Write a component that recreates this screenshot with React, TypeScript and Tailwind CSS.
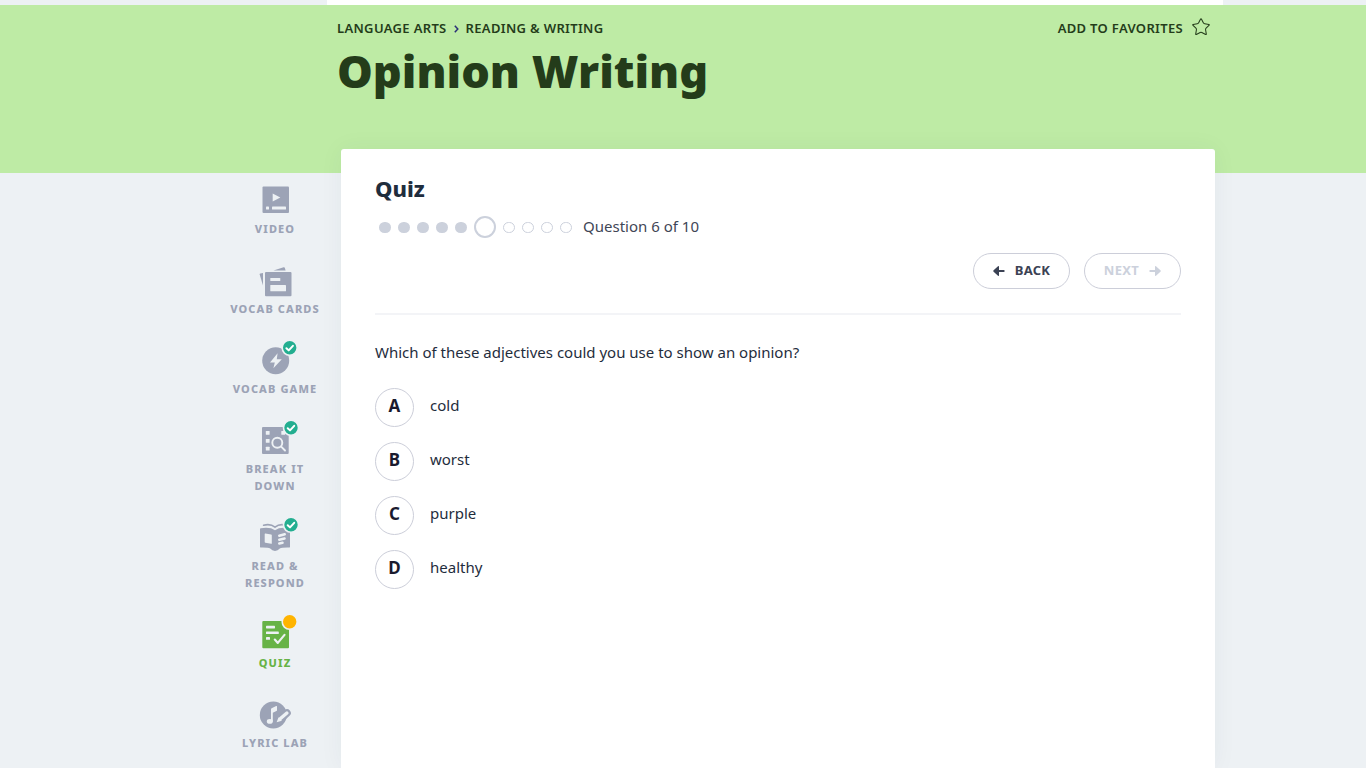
import { useState } from "react";
import type { ReactNode } from "react";
import { Star } from "lucide-react";
import clsx from "clsx";

type Badge = "done" | "current";

type Activity = {
  label: string;
  icon: ReactNode;
  badge?: Badge;
  badgeX?: number;
  active?: boolean;
};

const activities: Activity[] = [
  {
    label: "Video",
    icon: (
      <>
        <rect x="3.5" y="2.5" width="26.5" height="26.5" rx="1" />
        <g className="fill-[#edf1f4]">
          <path d="M13.7 9.5v8l7.6-4z" />
          <rect x="7" y="22.6" width="3" height="3" rx=".6" />
          <rect x="13" y="22.6" width="14" height="3" rx=".6" />
        </g>
      </>
    )
  },
  {
    label: "Vocab Cards",
    icon: (
      <>
        <path d="M14.5 6.4 24.6 3.3q.9-.3 1.2.5l.8 2.6z" />
        <path d="M.7 10.6q-.2-.8.6-1L4 9v12.4z" />
        <rect x="6" y="8" width="26.5" height="24.3" rx="1" />
        <g className="fill-[#edf1f4]">
          <rect x="11.3" y="14" width="10" height="3" rx=".6" />
          <rect x="11.3" y="21" width="15.7" height="6.3" rx=".6" />
        </g>
      </>
    )
  },
  {
    label: "Vocab Game",
    badge: "done",
    badgeX: 30.7,
    icon: (
      <>
        <circle cx="16.7" cy="16.7" r="13.5" />
        <path className="fill-[#edf1f4]" d="m18.6 9.2-7.6 9.3h4.8l-1.4 5.7 8.4-9h-5z" />
      </>
    )
  },
  {
    label: "Break It Down",
    badge: "done",
    badgeX: 32,
    icon: (
      <>
        <rect x="3" y="3" width="26.7" height="27" rx="1" />
        <g className="fill-[#edf1f4]">
          <rect x="6.8" y="7" width="3.8" height="3.8" rx=".5" />
          <rect x="6.8" y="15" width="3.8" height="3.8" rx=".5" />
          <rect x="6.8" y="22.7" width="3.8" height="3.8" rx=".5" />
          <rect x="22.3" y="7" width="3.8" height="3.8" rx=".5" />
        </g>
        <g className="fill-none stroke-[#edf1f4]" strokeWidth="1.9" strokeLinecap="round">
          <circle cx="18.3" cy="18.8" r="5" />
          <path d="m22.2 22.7 3.8 3.8" />
        </g>
      </>
    )
  },
  {
    label: "Read & Respond",
    badge: "done",
    badgeX: 32,
    icon: (
      <>
        <path
          className="fill-none stroke-[#9ca3b6]"
          strokeWidth="1.6"
          strokeLinecap="round"
          d="M4.6 4.2Q11.5 2.4 16 6.1q4.5-3.700 11-1.900"
        />
        <path d="M1 8.2q0-.8.8-.9Q11 5.7 16 9.3q5-3.600 14.200-2 .8.100.8.900v17.500q0 .9-.9.900-7-.2-9.300 1Q18.800 30 16 30t-4.800-2.400Q9 26.400 1.900 26.600 1 26.600 1 25.700z" />
        <path
          className="fill-[#edf1f4]"
          d="M5.7 13.1q0-.7.7-.6l5.700.9q.7.200.7.900v8.200q0 .5-.6.300l-5.800-1.100q-.7-.2-.7-.800z"
        />
        <path
          className="fill-none stroke-[#edf1f4]"
          strokeWidth="2.6"
          strokeLinecap="round"
          d="m20.300 14.700 5.400-1.400M20.300 18.700l5.200-1.100M20.300 22.400l3.200-.7"
        />
      </>
    )
  },
  {
    label: "Quiz",
    badge: "current",
    badgeX: 30.7,
    active: true,
    icon: (
      <>
        <rect x="3.3" y="3" width="26.7" height="27.3" rx="1" />
        <g className="fill-[#edf1f4]">
          <rect x="7" y="7.8" width="9" height="2.6" rx=".6" />
          <rect x="7" y="13.4" width="12.8" height="2.6" rx=".6" />
          <rect x="7" y="19" width="4" height="2.8" rx=".6" />
        </g>
        <path
          className="fill-none stroke-[#edf1f4]"
          strokeWidth="2.2"
          strokeLinecap="round"
          strokeLinejoin="round"
          d="m15.8 21.6 3 3.300 6.700-8"
        />
      </>
    )
  },
  {
    label: "Lyric Lab",
    icon: (
      <>
        <circle cx="14.3" cy="17" r="13.5" />
        <path className="stroke-[#9ca3b6]" strokeWidth="7.6" strokeLinecap="round" d="m24 18.600 4-3.600" />
        <path className="stroke-[#edf1f4]" strokeWidth="3.4" strokeLinecap="round" d="m21.200 20.700 6.700-5.700" />
        <path className="fill-[#edf1f4]" d="m17.600 24.200 2-5 3.300 3.600z" />
        <g className="fill-[#edf1f4]">
          <ellipse cx="10.8" cy="23.4" rx="3" ry="2.3" />
          <path d="M12 11.200q0-.6.600-.9l4.600-2.200q.8-.3.800.5v3.600q0 .6-.6.900l-3.600 1.700v8.600H12z" />
        </g>
      </>
    )
  }
];

const answers = [
  { letter: "A", text: "cold" },
  { letter: "B", text: "worst" },
  { letter: "C", text: "purple" },
  { letter: "D", text: "healthy" }
];

const total = 10;
const question = 6;

function ActivityIcon({ item }: { item: Activity }) {
  return (
    <svg
      viewBox="0 0 32 32"
      className={clsx("size-8 overflow-visible", item.active ? "fill-[#67b346]" : "fill-[#9ca3b6]")}
      aria-hidden="true"
    >
      {item.icon}
      {item.badge && (
        <circle
          cx={item.badgeX}
          cy="3.8"
          r="7.5"
          strokeWidth="1.6"
          className={clsx("stroke-[#edf1f4]", item.badge === "done" ? "fill-[#23ae90]" : "fill-[#ffb400]")}
        />
      )}
      {item.badge === "done" && (
        <path
          className="fill-none stroke-white"
          strokeWidth="2"
          strokeLinecap="round"
          strokeLinejoin="round"
          d={item.badgeX === 32 ? "m28.7 4.200 2.300 2.200 4.200-4.600" : "m27.4 4.200 2.300 2.200 4.200-4.600"}
        />
      )}
    </svg>
  );
}

function Arrow({ className }: { className?: string }) {
  return (
    <svg viewBox="0 0 12 12" className={clsx("size-3 fill-current", className)} aria-hidden="true">
      <path d="M5 1.200q1-.7 1 .5v3.200h4.700q1 0 1 1t-1 1H6v3.300q0 1.200-1 .500L.6 6.700q-.8-.7 0-1.500z" />
    </svg>
  );
}

export default function App() {
  const [selected, setSelected] = useState<string | null>(null);

  return (
    <div className="flex min-h-screen flex-col bg-[#edf1f4] font-['Noto_Sans',sans-serif] text-[#1f2d3d]">
      <div className="mx-auto w-full max-w-[1080px] pl-[184px]">
        <div className="h-[5px] bg-white" />
      </div>

      <header className="h-[168px] bg-[#beeba5] text-[#243c1a]">
        <div className="mx-auto flex max-w-[1064px] items-start justify-between pt-3 pr-1 pl-[186px]">
          <div>
            <nav className="flex h-6 items-center gap-[7px] text-[13px] font-semibold tracking-wide uppercase" aria-label="Breadcrumb">
              <a href="#language-arts">Language Arts</a>
              <svg viewBox="0 0 5 8" className="h-2 w-[5px] fill-none stroke-[#2b2f77]" strokeWidth="1.5" aria-hidden="true">
                <path d="m.8.8 3 3.200-3 3.200" />
              </svg>
              <a href="#reading-writing">Reading &amp; Writing</a>
            </nav>
            <h1 className="text-[45px] leading-[60px] font-black">Opinion Writing</h1>
          </div>
          <button className="flex h-6 items-center gap-2 text-[13px] font-semibold tracking-wide uppercase">
            Add to Favorites
            <Star size={20} strokeWidth={1.25} className="-mt-1" />
          </button>
        </div>
      </header>

      <div className="mx-auto -mt-6 flex w-full max-w-[1064px] grow">
        <nav className="w-[190px] shrink-0 pt-[35px] pr-[10px]" aria-label="Activities">
          <ul className="ml-auto flex w-28 flex-col gap-[27px]">
            {activities.map((item) => (
              <li key={item.label}>
                <a
                  href="#activity"
                  className={clsx(
                    "flex flex-col items-center gap-1 text-center text-[11px] leading-[17px] font-extrabold tracking-widest uppercase",
                    item.active ? "text-[#67b346]" : "text-[#9ca3b6]"
                  )}
                >
                  <ActivityIcon item={item} />
                  <span className={item.label.length > 12 ? "w-20" : undefined}>{item.label}</span>
                </a>
              </li>
            ))}
          </ul>
        </nav>

        <main className="min-w-0 grow rounded-t-[3px] bg-white px-[34px] pt-6 shadow-[0_0_24px_rgba(30,50,70,0.05)]">
          <h2 className="text-[22px] leading-[30px] font-extrabold">Quiz</h2>

          <div className="mt-[10px] flex h-7 items-center gap-[7px] pl-1">
            {Array.from({ length: total }, (_, i) => i + 1).map((n) => (
              <span
                key={n}
                className={clsx(
                  "rounded-full border-[#ccd1dc]",
                  n < question && "h-[11px] w-3 bg-[#ccd1dc]",
                  n === question && "size-[22px] border-2",
                  n > question && "h-[11px] w-3 border"
                )}
              />
            ))}
            <p className="ml-1 pb-0.5 text-[15px] leading-6 text-[#3f4656]">Question {question} of {total}</p>
          </div>

          <div className="mt-3 flex justify-end gap-[14px] border-b-2 border-[#f3f4f7] pb-6">
            <button className="flex h-9 w-[97px] items-center justify-center gap-[10px] rounded-full border border-[#ccced9] text-[13px] font-bold tracking-wide text-[#3b4254] uppercase">
              <Arrow />
              Back
            </button>
            <button
              disabled
              className="flex h-9 w-[97px] items-center justify-center gap-[10px] rounded-full border border-[#ccced9] text-[13px] font-bold tracking-wide text-[#ccd1dc] uppercase"
            >
              Next
              <Arrow className="rotate-180" />
            </button>
          </div>

          <p className="mt-[25px] text-[15px] leading-6">Which of these adjectives could you use to show an opinion?</p>

          <ul className="mt-6 flex flex-col gap-[15px]">
            {answers.map((answer) => (
              <li key={answer.letter}>
                <button
                  className="flex items-start gap-4 text-left"
                  aria-pressed={selected === answer.letter}
                  onClick={() => setSelected(answer.letter)}
                >
                  <span
                    className={clsx(
                      "flex size-[39px] justify-center rounded-full border pt-[5px] text-[17px] leading-6 font-bold text-[#1a1a2e]",
                      selected === answer.letter ? "border-[#67b346]" : "border-[#ccced9]"
                    )}
                  >
                    {answer.letter}
                  </span>
                  <span className="pt-[5px] text-[15px] leading-6">{answer.text}</span>
                </button>
              </li>
            ))}
          </ul>
        </main>
      </div>
    </div>
  );
}
